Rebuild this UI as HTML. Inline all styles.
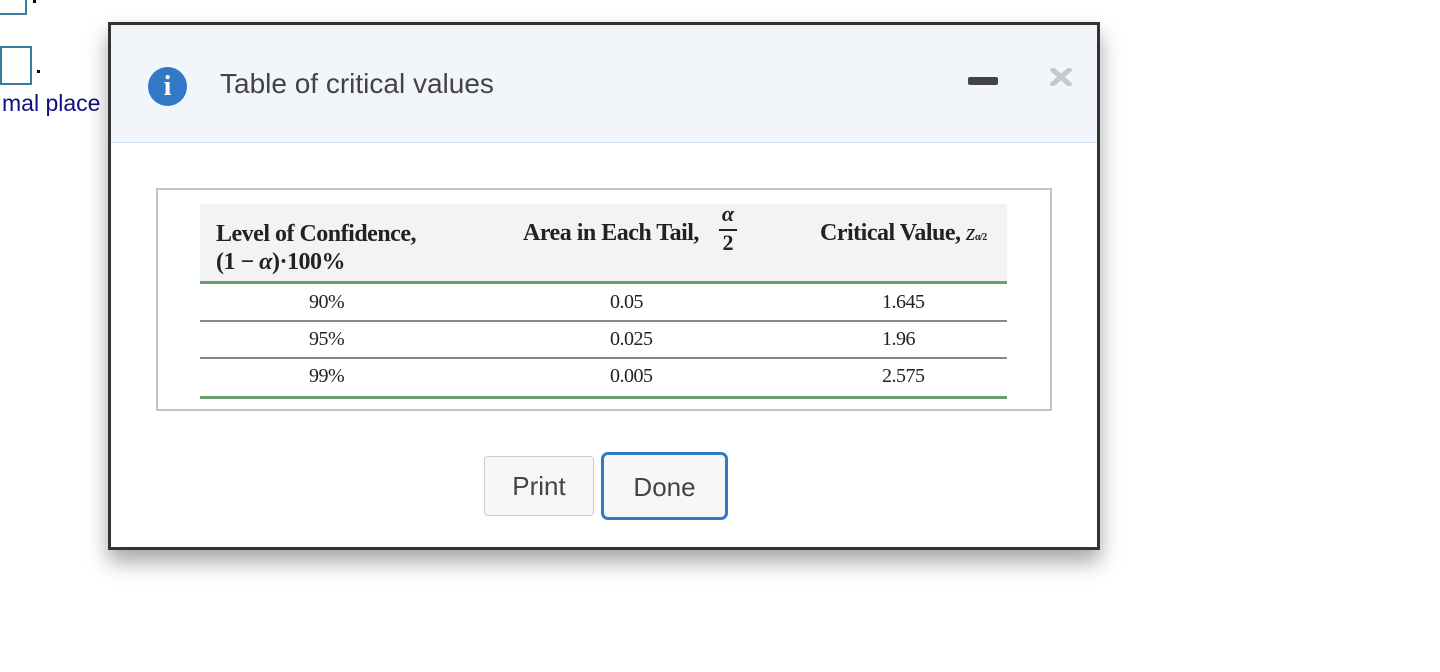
<!DOCTYPE html>
<html><head><meta charset="utf-8"><style>
*{box-sizing:border-box;margin:0;padding:0}
body{width:1440px;height:672px;background:#fff;position:relative;overflow:hidden;font-family:"Liberation Sans",Arial,sans-serif}
.abs{position:absolute}
.modal{left:108px;top:22px;width:992px;height:528px;border:3px solid #333;background:#fff;box-shadow:0 12px 20px rgba(0,0,0,.35)}
.hdr{left:0;top:0;width:986px;height:118px;background:#f2f5fa;border-bottom:1px solid #cfe0f3}
.serif{font-family:"Liberation Serif","Times New Roman",serif;color:#222}
.btn{border:1px solid #ccc;border-radius:4px;background:#f7f7f7;font-size:26px;color:#444;text-align:center}
</style></head><body>
<div class="abs" style="left:-2px;top:-10px;width:29px;height:25px;border:2px solid #3a7ca0"></div>
<div class="abs" style="left:33px;top:0px;width:3px;height:3px;background:#000"></div>
<div class="abs" style="left:0;top:46px;width:32px;height:39px;border:2px solid #3a7ca0"></div>
<div class="abs" style="left:37px;top:70px;width:3px;height:3px;background:#000"></div>
<div class="abs" style="left:2px;top:90px;font-size:23px;color:#10107a">mal place</div>

<div class="abs modal">
 <div class="abs hdr">
  <div class="abs" style="left:37px;top:42px;width:39px;height:39px;border-radius:50%;background:#3178c6;color:#fff;font-family:'Liberation Serif',serif;font-weight:bold;font-size:28px;text-align:center;line-height:39px">i</div>
  <div class="abs" style="left:109px;top:43px;font-size:28px;color:#444">Table of critical values</div>
  <div class="abs" style="left:857px;top:52px;width:30px;height:8px;border-radius:2px;background:#444"></div>
  <svg class="abs" style="left:939px;top:43px" width="22" height="18" viewBox="0 0 22 18"><path d="M3 2 L19 16 M19 2 L3 16" stroke="#c5c8ce" stroke-width="5" stroke-linecap="square"/></svg>
 </div>
 <div class="abs" style="left:45px;top:163px;width:896px;height:223px;border:2px solid #c4c4c4">
  <div class="abs" style="left:42px;top:14px;width:807px;height:78px;background:#f3f3f3"></div>
  <div class="abs serif" style="left:58px;top:30px;font-size:24px;font-weight:bold;line-height:28px;letter-spacing:-0.5px">Level of Confidence,<br>(1 − <i>α</i>)·100%</div>
  <div class="abs serif" style="left:365px;top:30px;font-size:24px;font-weight:bold;letter-spacing:-0.5px">Area in Each Tail,</div>
  <div class="abs serif" style="left:561px;top:12px;font-size:22px;font-weight:bold;text-align:center;width:18px;line-height:24px"><i>α</i><div style="border-top:2px solid #222;margin:3px 0 0"></div>2</div>
  <div class="abs serif" style="left:662px;top:30px;font-size:24px;font-weight:bold;letter-spacing:-0.5px">Critical Value, <i style="font-weight:normal">z</i><span style="font-size:10px">α/2</span></div>
  <div class="abs" style="left:42px;top:91px;width:807px;height:3px;background:#6a9e70"></div>
  <div class="abs" style="left:42px;top:130px;width:807px;height:2px;background:#888"></div>
  <div class="abs" style="left:42px;top:167px;width:807px;height:2px;background:#888"></div>
  <div class="abs" style="left:42px;top:206px;width:807px;height:3px;background:#6a9e70"></div>
  <div class="abs serif" style="left:151px;top:94px;font-size:20px;line-height:37px;letter-spacing:-0.5px">90%<br>95%<br>99%</div>
  <div class="abs serif" style="left:452px;top:94px;font-size:20px;line-height:37px;letter-spacing:-0.5px">0.05<br>0.025<br>0.005</div>
  <div class="abs serif" style="left:724px;top:94px;font-size:20px;line-height:37px;letter-spacing:-0.5px">1.645<br>1.96<br>2.575</div>
 </div>
 <div class="abs btn" style="left:373px;top:431px;width:110px;height:60px;line-height:58px">Print</div>
 <div class="abs btn" style="left:490px;top:427px;width:127px;height:68px;line-height:64px;border:3px solid #3178c6;border-radius:7px">Done</div>
</div>
</body></html>
